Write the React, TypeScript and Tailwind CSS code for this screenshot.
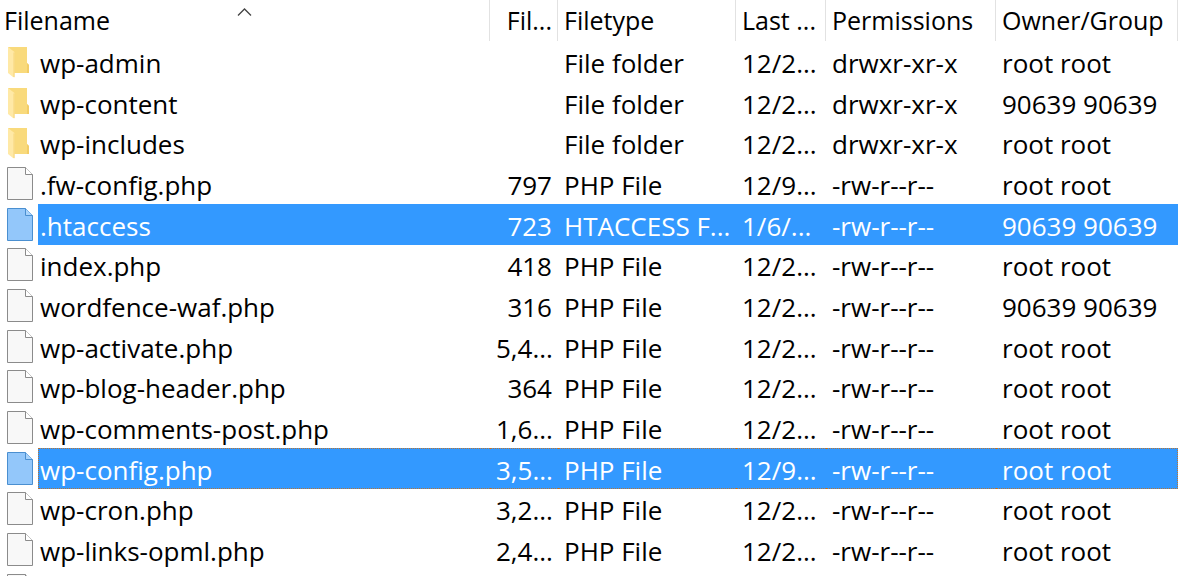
type Entry = {
  name: string;
  size: string;
  type: string;
  modified: string;
  permissions: string;
  owner: string;
  folder?: boolean;
  selected?: boolean;
  focused?: boolean;
};

const file = (name: string, size: string, modified: string, owner = 'root root'): Entry => ({
  name,
  size,
  type: 'PHP File',
  modified,
  permissions: '-rw-r--r--',
  owner,
});

const folder = (name: string, owner = 'root root'): Entry => ({
  name,
  size: '',
  type: 'File folder',
  modified: '12/2...',
  permissions: 'drwxr-xr-x',
  owner,
  folder: true,
});

const entries: Entry[] = [
  folder('wp-admin'),
  folder('wp-content', '90639 90639'),
  folder('wp-includes'),
  file('.fw-config.php', '797', '12/9...'),
  { ...file('.htaccess', '723', '1/6/...', '90639 90639'), type: 'HTACCESS F...', selected: true },
  file('index.php', '418', '12/2...'),
  file('wordfence-waf.php', '316', '12/2...', '90639 90639'),
  file('wp-activate.php', '5,4...', '12/2...'),
  file('wp-blog-header.php', '364', '12/2...'),
  file('wp-comments-post.php', '1,6...', '12/2...'),
  { ...file('wp-config.php', '3,5...', '12/9...'), selected: true, focused: true },
  file('wp-cron.php', '3,2...', '12/2...'),
  file('wp-links-opml.php', '2,4...', '12/2...'),
  { name: '', size: '', type: '', modified: '', permissions: '', owner: '' },
];

function FolderIcon() {
  return (
    <svg width="24" height="34" viewBox="0 0 24 34" aria-hidden="true" className="block">
      <path d="M1 2H20V18L22 20V28H6Z" fill="#f9da7c" />
      <path d="M20 18L22 20V28H20Z" fill="#f2cd68" />
      <path d="M1 2L7.5 7V32.5L6 32L1 28Z" fill="#ffe9a6" />
      <path d="M7 7.5V32" fill="none" stroke="#f6d47a" />
    </svg>
  );
}

function FileIcon({ selected }: { selected?: boolean }) {
  const line = selected ? '#4a8fd0' : '#8b8b8b';
  return (
    <svg width="26" height="34" viewBox="0 0 26 34" aria-hidden="true" className="block">
      <path d="M.5 .5H18.5L25.5 7.5V32.5H.5Z" fill={selected ? '#93c7fa' : '#f8f8f8'} stroke={line} />
      <path d="M18.5 .5V7.5H25.5" fill={selected ? '#a9d3fb' : '#fff'} stroke={line} />
    </svg>
  );
}

const headCell = 'border-r border-[#e2e2e2] p-0 font-normal';
const headButton = 'block h-[41px] w-full px-[6px] text-left leading-[41px] whitespace-nowrap';
const cell = 'pt-[2px] pb-0 leading-9 whitespace-nowrap';

function Row({ entry }: { entry: Entry }) {
  const tone = entry.selected ? 'bg-[#3399ff] text-white' : '';
  const outline = entry.focused ? 'border-y border-dotted border-[#b87434]' : '';
  const shared = `${cell} ${tone} ${outline}`;
  return (
    <tr aria-selected={!!entry.selected} className="h-[41px] nth-[3n]:h-10">
      <td className="py-0 pr-0 pl-[7px]">{entry.folder ? <FolderIcon /> : <FileIcon selected={entry.selected} />}</td>
      <td className={`pr-1 ${entry.focused ? 'border-l pl-px' : 'pl-[2px]'} ${shared}`}>{entry.name}</td>
      <td className={`px-[6px] text-right ${shared}`}>{entry.size}</td>
      <td className={`px-[6px] ${shared}`}>{entry.type}</td>
      <td className={`px-[6px] ${shared}`}>{entry.modified}</td>
      <td className={`px-[6px] ${shared}`}>{entry.permissions}</td>
      <td className={`px-[6px] ${shared} ${entry.focused ? 'border-r' : ''}`}>{entry.owner}</td>
    </tr>
  );
}

export default function App() {
  return (
    <main className="h-screen overflow-hidden bg-white pr-[21px] font-['Open_Sans','Noto_Sans',sans-serif] text-[26px] text-black">
      <table className="w-full table-fixed border-separate border-spacing-0">
        <colgroup>
          <col className="w-[38px]" />
          <col />
          <col className="w-[68px]" />
          <col className="w-[178px]" />
          <col className="w-[90px]" />
          <col className="w-[170px]" />
          <col className="w-[182px]" />
        </colgroup>
        <thead className="text-[25px]">
          <tr>
            <th colSpan={2} scope="col" aria-sort="ascending" className={headCell}>
              <button type="button" className="relative block h-[41px] w-full pl-1 text-left leading-[41px]">
                Filename
                <svg width="16" height="10" viewBox="0 0 16 10" aria-hidden="true" className="absolute top-[7px] left-1/2 -translate-x-1/2">
                  <path d="M1 8.5L7.5 2L14 8.5" fill="none" stroke="#444" strokeWidth="1.3" />
                </svg>
              </button>
            </th>
            <th scope="col" className={headCell}>
              <button type="button" className="block h-[41px] w-full px-[5px] text-right leading-[41px] whitespace-nowrap">Fil...</button>
            </th>
            <th scope="col" className={headCell}><button type="button" className={headButton}>Filetype</button></th>
            <th scope="col" className={headCell}><button type="button" className={headButton}>Last ...</button></th>
            <th scope="col" className={headCell}><button type="button" className={headButton}>Permissions</button></th>
            <th scope="col" className={headCell}><button type="button" className={headButton}>Owner/Group</button></th>
          </tr>
        </thead>
        <tbody>
          {entries.map((entry, i) => (
            <Row key={i} entry={entry} />
          ))}
        </tbody>
      </table>
    </main>
  );
}
